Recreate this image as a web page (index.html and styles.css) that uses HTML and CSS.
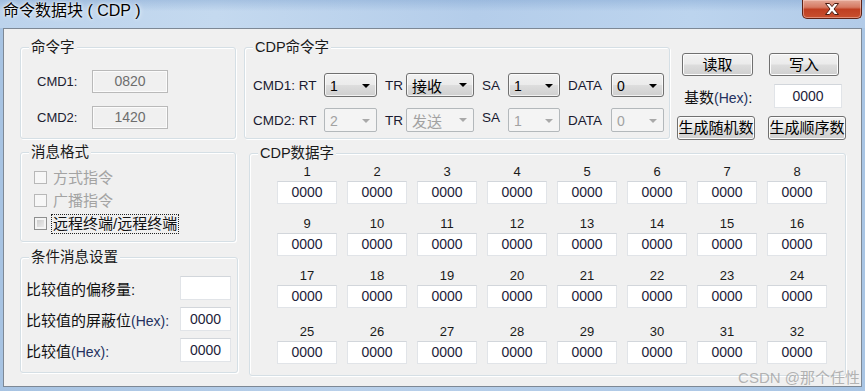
FILE: index.html
```html
<!DOCTYPE html>
<html lang="zh">
<head>
<meta charset="utf-8">
<title>命令数据块（CDP）</title>
<link rel="stylesheet" href="styles.css">
</head>
<body>
<div class="window">
  <div class="titlebar">
    <span class="title">命令数据块 ( CDP )</span>
    <div class="close">
      <svg width="18" height="12" viewBox="0 0 18 12"><path d="M2.5 0.5 H6.5 L9 3.6 L11.5 0.5 H15.5 L11 6 L15.5 11.5 H11.5 L9 8.4 L6.5 11.5 H2.5 L7 6 Z" fill="#fff" stroke="#4b1c12" stroke-width="1" stroke-linejoin="round"/></svg>
    </div>
  </div>
  <div class="client">
    <div class="main">
      <div class="leftcol">
        <div class="group g-cmd">
          <span class="legend">命令字</span>
          <div class="kv first"><span class="lbl">CMD1:</span><span class="dis-input">0820</span></div>
          <div class="kv"><span class="lbl">CMD2:</span><span class="dis-input">1420</span></div>
        </div>
        <div class="group g-fmt">
          <span class="legend">消息格式</span>
          <div class="chk-row dis first"><span class="cb"></span><span>方式指令</span></div>
          <div class="chk-row dis"><span class="cb"></span><span>广播指令</span></div>
          <div class="chk-row on"><span class="cb"></span><span class="focus">远程终端/远程终端</span></div>
        </div>
        <div class="group g-cond">
          <span class="legend">条件消息设置</span>
          <div class="cond-row first"><span>比较值的偏移量:</span><span class="txt small"></span></div>
          <div class="cond-row"><span>比较值的屏蔽位<span class="hex">(Hex):</span></span><span class="txt small">0000</span></div>
          <div class="cond-row"><span>比较值<span class="hex">(Hex):</span></span><span class="txt small">0000</span></div>
        </div>
      </div>
      <div class="rightcol">
        <div class="toprow">
          <div class="group g-cdpcmd">
            <span class="legend">CDP命令字</span>
            <div class="cmdgrid">
              <span class="cl">CMD1: RT</span>
              <div class="combo"><span>1</span><svg class="arr" width="8" height="4" viewBox="0 0 8 4"><path d="M0 0 H8 L4 4 Z"/></svg></div>
              <span class="cl tr">TR</span>
              <div class="combo cjk"><span>接收</span><svg class="arr" width="8" height="4" viewBox="0 0 8 4"><path d="M0 0 H8 L4 4 Z"/></svg></div>
              <span class="cl sa">SA</span>
              <div class="combo"><span>1</span><svg class="arr" width="8" height="4" viewBox="0 0 8 4"><path d="M0 0 H8 L4 4 Z"/></svg></div>
              <span class="cl sa">DATA</span>
              <div class="combo"><span>0</span><svg class="arr" width="8" height="4" viewBox="0 0 8 4"><path d="M0 0 H8 L4 4 Z"/></svg></div>

              <span class="cl">CMD2: RT</span>
              <div class="combo dis"><span>2</span><svg class="arr" width="8" height="4" viewBox="0 0 8 4"><path d="M0 0 H8 L4 4 Z"/></svg></div>
              <span class="cl tr">TR</span>
              <div class="combo dis cjk"><span>发送</span><svg class="arr" width="8" height="4" viewBox="0 0 8 4"><path d="M0 0 H8 L4 4 Z"/></svg></div>
              <span class="cl sa up">SA</span>
              <div class="combo dis"><span>1</span><svg class="arr" width="8" height="4" viewBox="0 0 8 4"><path d="M0 0 H8 L4 4 Z"/></svg></div>
              <span class="cl sa">DATA</span>
              <div class="combo dis"><span>0</span><svg class="arr" width="8" height="4" viewBox="0 0 8 4"><path d="M0 0 H8 L4 4 Z"/></svg></div>
            </div>
          </div>
          <div class="btnpanel">
            <div class="bp-row1"><span class="btn w71">读取</span><span class="btn w70">写入</span></div>
            <div class="bp-row2"><span class="bp-lbl">基数<span class="hex">(Hex)</span>:</span><span class="txt base">0000</span></div>
            <div class="bp-row3"><span class="btn w78">生成随机数</span><span class="btn w78">生成顺序数</span></div>
          </div>
        </div>
        <div class="group g-data">
          <span class="legend">CDP数据字</span>
          <div class="dgrid">
            <div class="cell"><span class="n">1</span><span class="txt">0000</span></div>
            <div class="cell"><span class="n">2</span><span class="txt">0000</span></div>
            <div class="cell"><span class="n">3</span><span class="txt">0000</span></div>
            <div class="cell"><span class="n">4</span><span class="txt">0000</span></div>
            <div class="cell"><span class="n">5</span><span class="txt">0000</span></div>
            <div class="cell"><span class="n">6</span><span class="txt">0000</span></div>
            <div class="cell"><span class="n">7</span><span class="txt">0000</span></div>
            <div class="cell"><span class="n">8</span><span class="txt">0000</span></div>
            <div class="cell"><span class="n">9</span><span class="txt">0000</span></div>
            <div class="cell"><span class="n">10</span><span class="txt">0000</span></div>
            <div class="cell"><span class="n">11</span><span class="txt">0000</span></div>
            <div class="cell"><span class="n">12</span><span class="txt">0000</span></div>
            <div class="cell"><span class="n">13</span><span class="txt">0000</span></div>
            <div class="cell"><span class="n">14</span><span class="txt">0000</span></div>
            <div class="cell"><span class="n">15</span><span class="txt">0000</span></div>
            <div class="cell"><span class="n">16</span><span class="txt">0000</span></div>
            <div class="cell"><span class="n">17</span><span class="txt">0000</span></div>
            <div class="cell"><span class="n">18</span><span class="txt">0000</span></div>
            <div class="cell"><span class="n">19</span><span class="txt">0000</span></div>
            <div class="cell"><span class="n">20</span><span class="txt">0000</span></div>
            <div class="cell"><span class="n">21</span><span class="txt">0000</span></div>
            <div class="cell"><span class="n">22</span><span class="txt">0000</span></div>
            <div class="cell"><span class="n">23</span><span class="txt">0000</span></div>
            <div class="cell"><span class="n">24</span><span class="txt">0000</span></div>
            <div class="cell"><span class="n">25</span><span class="txt">0000</span></div>
            <div class="cell"><span class="n">26</span><span class="txt">0000</span></div>
            <div class="cell"><span class="n">27</span><span class="txt">0000</span></div>
            <div class="cell"><span class="n">28</span><span class="txt">0000</span></div>
            <div class="cell"><span class="n">29</span><span class="txt">0000</span></div>
            <div class="cell"><span class="n">30</span><span class="txt">0000</span></div>
            <div class="cell"><span class="n">31</span><span class="txt">0000</span></div>
            <div class="cell"><span class="n">32</span><span class="txt">0000</span></div>
          </div>
        </div>
      </div>
    </div>
  </div>
  <div class="watermark">CSDN @那个任性</div>
</div>
</body>
</html>
```

FILE: styles.css
```css
* { box-sizing: border-box; }
html, body { margin: 0; padding: 0; }
body {
  width: 865px;
  height: 391px;
  overflow: hidden;
  font-family: "Liberation Sans", "Noto Sans CJK SC", sans-serif;
  background: #a9c6e6;
}
.window {
  width: 865px;
  height: 391px;
  position: relative;
  display: flex;
  flex-direction: column;
  background: linear-gradient(90deg, #a7c3e2 0%, #b9d0ea 40%, #a9c5e4 100%);
}
.titlebar {
  height: 28px;
  flex: none;
  display: flex;
  align-items: flex-start;
  background:
    linear-gradient(180deg, rgba(110,150,200,0.35) 0%, rgba(255,255,255,0) 40%),
    linear-gradient(90deg, #bcd3ec 0%, #c4d9ef 25%, #b4cdea 55%, #bcd4ee 80%, #b2cbe8 100%);
}
.title {
  font-size: 16px;
  line-height: 18px;
  margin: 2px 0 0 3px;
  color: #000;
  white-space: pre;
  text-shadow: 0 0 5px rgba(255,255,255,0.95), 0 0 2px rgba(255,255,255,0.9);
}
.close {
  margin-left: auto;
  margin-right: 3px;
  width: 60px;
  height: 19px;
  border: 1px solid #5e2317;
  border-top: none;
  border-radius: 0 0 5px 5px;
  background: linear-gradient(180deg, #e3a796 0%, #d67a63 40%, #bf3f22 52%, #c8502f 100%);
  box-shadow: inset 0 0 0 1px rgba(255,220,210,0.45);
  display: flex;
  align-items: center;
  justify-content: center;
}
.client {
  margin: 0 3px 4px 3px;
  flex: 1;
  background: #f0f0f0;
  border: 1px solid #7d8895;
  padding: 18px 0 0 16px;
}
.main { display: flex; gap: 6px; }
.leftcol { display: flex; flex-direction: column; width: 218px; }
.rightcol { display: flex; flex-direction: column; }
.toprow { display: flex; }

.group {
  border: 1px solid #d5dfe5;
  border-radius: 3px;
  box-shadow: inset 1px 1px 0 #fff, 1px 1px 0 #fff;
  display: flex;
  flex-direction: column;
}
.legend {
  align-self: flex-start;
  font-size: 14.5px;
  line-height: 16px;
  height: 16px;
  margin: -9px 0 -7px 8px;
  padding: 0 2px;
  background: #f0f0f0;
  color: #1a1a1a;
  white-space: nowrap;
}

/* 命令字 */
.g-cmd { width: 216px; height: 92px; }
.kv { display: flex; align-items: center; height: 23px; padding-left: 16px; margin-top: 13px; }
.kv.first { margin-top: 22px; }
.kv .lbl { width: 55px; font-size: 13px; color: #1c2030; }
.dis-input {
  width: 76px;
  height: 23px;
  border: 1px solid #b9b9b9;
  background: #f0f0f0;
  box-shadow: inset 0 0 0 1px #fbfbfb;
  color: #6d6d6d;
  font-size: 14px;
  line-height: 21px;
  text-align: center;
}

/* 消息格式 */
.g-fmt { width: 216px; height: 90px; margin-top: 13px; }
.chk-row { display: flex; align-items: center; height: 23px; padding-left: 13px; font-size: 15px; line-height: 18px; }
.chk-row.first { margin-top: 13px; }
.chk-row.dis { color: #a3a3a3; }
.chk-row.on { color: #111; }
.cb {
  width: 13px;
  height: 13px;
  border: 1px solid #b8b8b8;
  background: #f7f7f7;
  margin-right: 6px;
  flex: none;
}
.chk-row.on .cb {
  border-color: #8e8f8f;
  background: linear-gradient(135deg, #c6c6c6, #f2f2f2);
  box-shadow: inset 0 0 0 2px #f4f4f4;
}
.focus { outline: 1px dotted #222; padding: 0 1px; margin-left: -1px; }

/* 条件消息设置 */
.g-cond { width: 218px; height: 116px; margin-top: 15px; }
.cond-row {
  display: flex;
  align-items: center;
  justify-content: space-between;
  height: 24px;
  padding: 0 6px 0 5px;
  margin-top: 7px;
  font-size: 15px;
  color: #111;
  white-space: nowrap;
}
.cond-row.first { margin-top: 18px; }
.hex { font-size: 14px; color: #24305e; }

.txt {
  display: block;
  width: 60px;
  height: 23px;
  background: #fff;
  border: 1px solid #e1e4e8;
  border-top-color: #d2d6db;
  text-align: center;
  font-size: 14px;
  line-height: 21px;
  color: #1d1d3a;
}
.txt.small { width: 51px; height: 24px; line-height: 22px; }

/* CDP命令字 */
.g-cdpcmd { width: 426px; height: 92px; }
.cmdgrid {
  display: grid;
  grid-template-columns: 71px 53px 29px 68px 34px 52px 51px 53px;
  grid-template-rows: 24px 24px;
  row-gap: 11px;
  margin-top: 25px;
  padding-left: 8px;
  align-items: center;
}
.cl { font-size: 13.5px; color: #1a1a30; white-space: nowrap; }
.cl.tr { padding-left: 8px; }
.cl.sa { padding-left: 8px; }
.cl.up { position: relative; top: -3px; }
.combo {
  height: 24px;
  border: 1px solid #707070;
  border-radius: 3px;
  background: linear-gradient(180deg, #f2f2f2 0%, #ebebeb 48%, #dddddd 52%, #cfcfcf 100%);
  box-shadow: inset 0 0 0 1px rgba(255,255,255,0.7);
  display: flex;
  align-items: center;
  justify-content: space-between;
  padding: 2px 6px 0 5px;
  font-size: 14px;
  color: #000;
}
.combo.cjk { font-size: 15px; padding-top: 0; }
.combo .arr { fill: #000; flex: none; }
.combo.dis {
  border-color: #b3b8bb;
  border-radius: 2px;
  background: #f4f4f4;
  box-shadow: none;
  color: #a2a2a2;
}
.combo.dis .arr { fill: #a9a9a9; }

/* 按钮区 */
.btnpanel { width: 177px; padding-top: 6px; display: flex; flex-direction: column; gap: 8px; }
.bp-row1 { display: flex; height: 23px; padding-left: 12px; gap: 16px; }
.bp-row2 { display: flex; align-items: center; height: 24px; padding-left: 14px; }
.bp-row3 { display: flex; height: 24px; padding-left: 7px; gap: 13px; }
.bp-lbl { width: 90px; font-size: 15px; color: #111; white-space: nowrap; }
.txt.base { width: 68px; height: 24px; line-height: 22px; }
.btn {
  border: 1px solid #707070;
  border-radius: 3px;
  background: linear-gradient(180deg, #f2f2f2 0%, #ebebeb 48%, #dddddd 52%, #cfcfcf 100%);
  box-shadow: inset 0 0 0 1px #fcfcfc;
  font-size: 15px;
  line-height: 18px;
  display: flex;
  align-items: center;
  justify-content: center;
  color: #000;
  white-space: nowrap;
}
.w71 { width: 71px; }
.w70 { width: 70px; }
.w78 { width: 78px; }

/* CDP数据字 */
.g-data { width: 597px; height: 223px; margin-top: 13px; margin-left: 5px; }
.dgrid {
  display: grid;
  grid-template-columns: repeat(8, 60px);
  column-gap: 10px;
  row-gap: 11px;
  margin-top: 9px;
  padding-left: 27px;
}
.cell { display: flex; flex-direction: column; align-items: center; }
.cell:nth-child(n+25) { margin-top: 4px; }
.cell .n { height: 18px; line-height: 18px; font-size: 13px; color: #1a1a1a; }

.watermark {
  position: absolute;
  right: 5px;
  bottom: 5px;
  font-size: 15px;
  line-height: 16px;
  color: rgba(150,150,150,0.7);
  white-space: nowrap;
}
```
